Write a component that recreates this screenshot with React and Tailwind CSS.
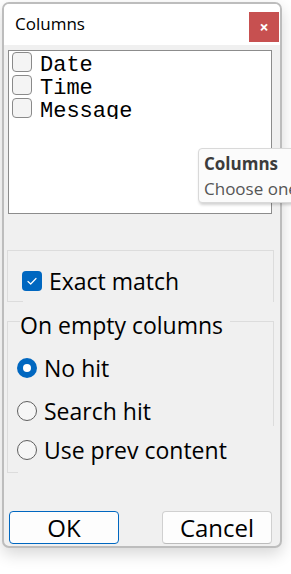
import React from 'react'

const ui = "font-['Open_Sans','Noto_Sans',sans-serif]"

function Box() {
  return <div className="w-[20px] h-[20px] shrink-0 rounded-[4px] border border-[#8a8a8a] bg-[#f4f4f4]" />
}

function Radio({ on }) {
  if (on) {
    return (
      <div className="w-[20px] h-[20px] shrink-0 rounded-full bg-[#0067c0] flex items-center justify-center">
        <div className="w-[8px] h-[8px] rounded-full bg-white" />
      </div>
    )
  }
  return <div className="w-[20px] h-[20px] shrink-0 rounded-full border border-[#5f5f5f] bg-[#f6f6f6]" />
}

function Row({ label, clip }) {
  return (
    <div className={`flex items-start pl-[3px] ${clip ? 'h-[22px] overflow-hidden' : 'h-[23px]'}`}>
      <div className="mt-[1px]"><Box /></div>
      <span className="ml-[8px] pt-[5px] font-['Liberation_Mono',monospace] text-[22px] leading-[19px] text-black">{label}</span>
    </div>
  )
}

function Option({ on, label, className }) {
  return (
    <div className={`pl-[9px] flex items-center h-[20px] ${className}`}>
      <Radio on={on} />
      <span className="ml-[7px] text-[23px] leading-[22px] text-black">{label}</span>
    </div>
  )
}

export default function App() {
  return (
    <div className={`relative w-[291px] h-[574px] overflow-hidden bg-white ${ui}`}>
      <div className="ml-[2px] mt-[2px] w-[280px] h-[546px] rounded-[7px] border-2 border-[#bdbdbd] bg-[#f0f0f0] shadow-[0_6px_16px_rgba(0,0,0,0.16)] flex flex-col overflow-hidden">
        {/* title bar */}
        <div className="h-[41px] bg-white flex items-start justify-between shrink-0">
          <span className="ml-[11px] mt-[8px] text-[17px] leading-[23px] text-black">Columns</span>
          <div className="mt-[8px] mr-[1px] w-[30px] h-[30px] bg-[#c75050] flex items-center justify-center text-white text-[16px] font-bold leading-none">×</div>
        </div>

        {/* list */}
        <div className="ml-[4px] mt-[5px] w-[264px] h-[164px] border border-[#8c8c8c] bg-white shrink-0">
          <Row label="Date" />
          <Row label="Time" />
          <Row label="Message" clip />
        </div>

        {/* exact match group */}
        <div className="ml-[3px] mt-[36px] w-[267px] border-t border-l border-r border-[#dcdcdc] flex flex-col shrink-0">
          <div className="h-[50px] pt-[20px] pl-[14px] flex items-start">
            <div className="flex items-center h-[20px]">
              <div className="w-[20px] h-[20px] rounded-[4px] bg-[#0067c0] flex items-center justify-center">
                <svg width="20" height="20" viewBox="0 0 20 20" fill="none">
                  <path d="M6 10.5 L8.7 13 L14 7.5" stroke="white" strokeWidth="1.2" strokeLinecap="round" strokeLinejoin="round" />
                </svg>
              </div>
              <span className="ml-[7px] text-[23px] leading-[22px] text-black">Exact match</span>
            </div>
          </div>
          <div className="w-[15px] h-px bg-[#dcdcdc]" />
        </div>

        {/* on empty columns group */}
        <div className="ml-[3px] mt-[19px] w-[267px] border-t border-[#dcdcdc] flex shrink-0">
          <div className="flex-1 border-l border-[#dcdcdc] flex flex-col">
            <div className="self-start ml-[12px] -mt-[8px] pr-[7px] bg-[#f0f0f0] text-[23px] leading-[22px] text-black">On empty columns</div>
            <Option on label="No hit" className="mt-[22px]" />
            <Option label="Search hit" className="mt-[23px]" />
            <Option label="Use prev content" className="mt-[19px]" />
            <div className="mt-[12px] w-[10px] h-px bg-[#dcdcdc]" />
          </div>
          <div className="w-px h-[104px] bg-[#dcdcdc]" />
        </div>

        {/* buttons */}
        <div className="mt-[38px] ml-[5px] flex items-start gap-[43px] shrink-0">
          <button className="w-[110px] h-[33px] rounded-[4px] border border-[#0067c0] bg-[#fdfdfd] text-[24px] leading-none text-black">OK</button>
          <button className="w-[110px] h-[33px] rounded-[4px] border border-[#d0d0d0] border-b-[#bcbcbc] bg-[#fdfdfd] text-[24px] leading-none text-black">Cancel</button>
        </div>
      </div>

      {/* tooltip */}
      <div className="absolute left-[198px] top-[148px] h-[55px] pl-[5px] pr-[10px] pt-[2px] rounded-[4px] border border-[#d9d9d9] bg-[#fbfbfb] shadow-[1px_2px_3px_rgba(0,0,0,0.18)] whitespace-nowrap">
        <div className="text-[17px] leading-[25px] font-bold text-[#3c3c3c]">Columns</div>
        <div className="text-[17px] leading-[25px] text-[#555555]">Choose one or more columns</div>
      </div>
    </div>
  )
}
